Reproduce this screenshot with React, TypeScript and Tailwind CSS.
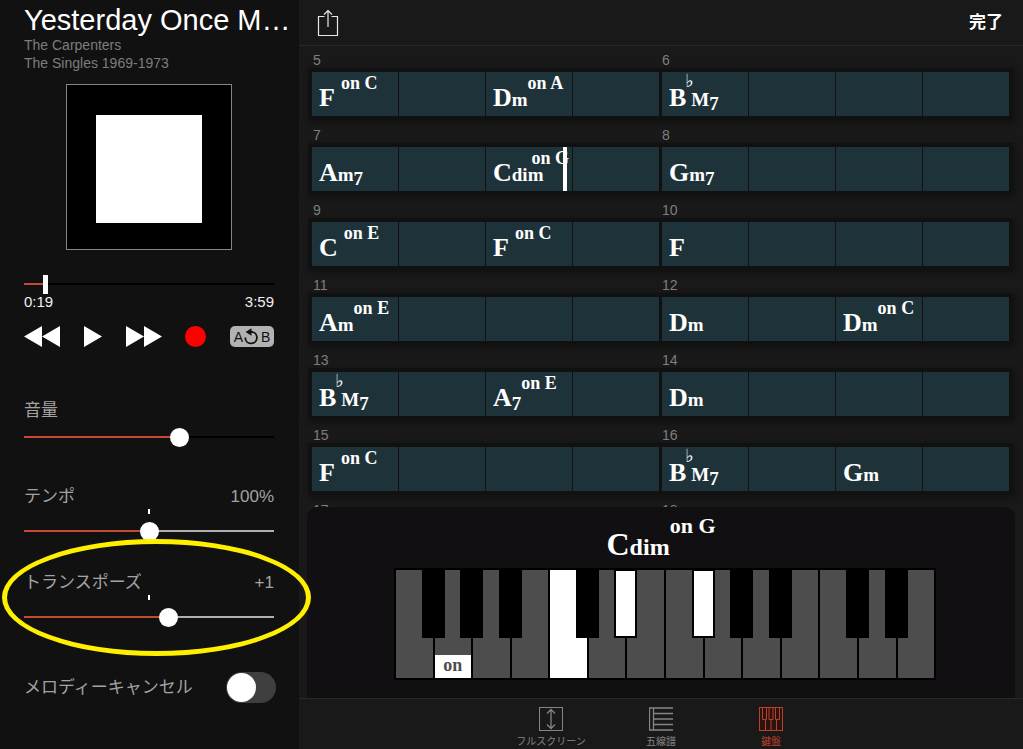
import { useState } from 'react';
import type { ReactNode } from 'react';
import clsx from 'clsx';

type ChordData = {
  root: string;
  flat?: boolean;
  quality?: string;
  seven?: boolean;
  bass?: string;
};

type Measure = {
  number: number;
  beats: (ChordData | null)[];
};

const MEASURES: Measure[] = [
  { number: 5, beats: [{ root: 'F', bass: 'C' }, null, { root: 'D', quality: 'm', bass: 'A' }, null] },
  { number: 6, beats: [{ root: 'B', flat: true, quality: 'M', seven: true }, null, null, null] },
  { number: 7, beats: [{ root: 'A', quality: 'm', seven: true }, null, { root: 'C', quality: 'dim', bass: 'G' }, null] },
  { number: 8, beats: [{ root: 'G', quality: 'm', seven: true }, null, null, null] },
  { number: 9, beats: [{ root: 'C', bass: 'E' }, null, { root: 'F', bass: 'C' }, null] },
  { number: 10, beats: [{ root: 'F' }, null, null, null] },
  { number: 11, beats: [{ root: 'A', quality: 'm', bass: 'E' }, null, null, null] },
  { number: 12, beats: [{ root: 'D', quality: 'm' }, null, { root: 'D', quality: 'm', bass: 'C' }, null] },
  { number: 13, beats: [{ root: 'B', flat: true, quality: 'M', seven: true }, null, { root: 'A', seven: true, bass: 'E' }, null] },
  { number: 14, beats: [{ root: 'D', quality: 'm' }, null, null, null] },
  { number: 15, beats: [{ root: 'F', bass: 'C' }, null, null, null] },
  { number: 16, beats: [{ root: 'B', flat: true, quality: 'M', seven: true }, null, { root: 'G', quality: 'm' }, null] },
  { number: 17, beats: [null, null, null, null] },
  { number: 18, beats: [null, null, null, null] },
];

const ROWS = Array.from({ length: MEASURES.length / 2 }, (_, i) => MEASURES.slice(i * 2, i * 2 + 2));

// White keys from left to right; `sharp` is the black key on the right edge
const KEYS: { lit?: boolean; bass?: boolean; sharp?: 'off' | 'lit' }[] = [
  { sharp: 'off' },
  { bass: true, sharp: 'off' },
  { sharp: 'off' },
  {},
  { lit: true, sharp: 'off' },
  { sharp: 'lit' },
  {},
  { sharp: 'lit' },
  { sharp: 'off' },
  { sharp: 'off' },
  {},
  { sharp: 'off' },
  { sharp: 'off' },
  {},
];

function Chord({ chord, large }: { chord: ChordData; large?: boolean }) {
  const small = large ? 'text-[24px] leading-[0px]' : 'text-[19px] leading-[0px]';
  return (
    <div className="flex items-start whitespace-nowrap font-['Liberation_Serif',serif] font-bold text-white">
      <div className={large ? 'mt-[21px] text-[32px] leading-8' : 'mt-[13px] text-[26px] leading-[26px]'}>
        {chord.root}
        {chord.flat && (
          <span className="relative inline-block h-0 w-[5px]">
            <span className="absolute -left-px bottom-4 font-['DejaVu_Sans',sans-serif] text-[18px] font-normal leading-none">
              ♭
            </span>
          </span>
        )}
        {chord.quality && <span className={small}>{chord.quality}</span>}
        {chord.seven && <span className={clsx(small, 'align-[-4px]')}>7</span>}
      </div>
      {chord.bass && (
        <div
          className={clsx(
            large ? 'mt-2 text-[22px] leading-[22px]' : 'mt-0.5 text-[18px] leading-[18px]',
            !chord.quality && !chord.seven && 'ml-1.5',
            // long names tuck the bass note above the quality to stay inside the beat
            !large && chord.quality === 'dim' && '-ml-3',
          )}
        >
          on {chord.bass}
        </div>
      )}
    </div>
  );
}

type SliderProps = {
  id: string;
  label: string;
  min: number;
  max: number;
  initial: number;
  rest: string;
  bar?: boolean;
};

function Slider({ id, label, min, max, initial, rest, bar }: SliderProps) {
  const [value, setValue] = useState(initial);
  const percent = ((value - min) / (max - min)) * 100;

  return (
    <input
      id={id}
      type="range"
      aria-label={label}
      min={min}
      max={max}
      value={value}
      onChange={(e) => setValue(Number(e.target.value))}
      className={clsx(
        'block h-5 w-full cursor-pointer appearance-none bg-[length:100%_2px] bg-center bg-no-repeat outline-none',
        '[&::-webkit-slider-thumb]:appearance-none [&::-webkit-slider-thumb]:bg-white',
        bar
          ? '[&::-webkit-slider-thumb]:h-[19px] [&::-webkit-slider-thumb]:w-[5px]'
          : '[&::-webkit-slider-thumb]:size-[19px] [&::-webkit-slider-thumb]:rounded-full',
      )}
      style={{ backgroundImage: `linear-gradient(to right, #c54a35 ${percent}%, ${rest} ${percent}%)` }}
    />
  );
}

function Tick() {
  return (
    <div className="flex h-3 justify-center">
      <div className="h-[5px] w-[2px] bg-white" />
    </div>
  );
}

function Transport() {
  return (
    <div className="mt-4 flex h-[21px] items-center justify-between">
      <button type="button" aria-label="Rewind">
        <svg width="36" height="21" viewBox="0 0 36 21" fill="#fff">
          <path d="M18 0v21L0 10.5zM36 0v21L18 10.5z" />
        </svg>
      </button>
      <button type="button" aria-label="Play">
        <svg width="18" height="21" viewBox="0 0 18 21" fill="#fff">
          <path d="M0 0l18 10.5L0 21z" />
        </svg>
      </button>
      <button type="button" aria-label="Fast forward">
        <svg width="36" height="21" viewBox="0 0 36 21" fill="#fff">
          <path d="M0 0l18 10.5L0 21zM18 0l18 10.5L18 21z" />
        </svg>
      </button>
      <button type="button" aria-label="Record" className="size-[21px] rounded-full bg-[#ff0000]" />
      <button
        type="button"
        aria-label="A-B repeat"
        className="flex h-[21px] w-11 items-center justify-center rounded-[5px] bg-[#b2b2b2] text-[14px] leading-4 text-[#111]"
      >
        A
        <svg className="shrink-0" width="18" height="17" viewBox="0 0 18 17" fill="none">
          <path d="M6 4h3.500a5.800 5.800 0 1 1-7.200 5.600" stroke="#111" strokeWidth="1.8" />
          <path d="M2.500 4L8.500 0.300v7.400z" fill="#111" />
        </svg>
        B
      </button>
    </div>
  );
}

function Sidebar() {
  return (
    <aside className="w-[299px] shrink-0 bg-[#111111] pl-6 pr-[25px] pt-1 text-[#a3a3a3]">
      <h1 className="-mr-6 whitespace-nowrap text-[29px] leading-8 text-white">Yesterday Once M…</h1>
      <p className="text-[14px] leading-[18px] text-[#7d7d7d]">The Carpenters</p>
      <p className="text-[14px] leading-[18px] text-[#7d7d7d]">The Singles 1969-1973</p>

      {/* Artwork */}
      <div className="mx-auto mt-3 flex size-[166px] items-center justify-center border border-[#858585] bg-black pt-1">
        <div className="h-[108px] w-[106px] bg-white" />
      </div>

      <div className="mt-6">
        <Slider id="position" label="Position" min={0} max={239} initial={19} rest="#000" bar />
        <div className="flex justify-between text-[15px] leading-4 text-[#f0f0f0]">
          <span>0:19</span>
          <span>3:59</span>
        </div>
      </div>

      <Transport />

      <div className="mt-[52px]">
        <label htmlFor="volume" className="block text-[17px] leading-6">音量</label>
        <div className="mt-1">
          <Slider id="volume" label="音量" min={0} max={100} initial={63} rest="#000" />
        </div>
      </div>

      <div className="mt-[38px]">
        <div className="flex justify-between text-[17px] leading-6">
          <label htmlFor="tempo">テンポ</label>
          <span>100%</span>
        </div>
        <Tick />
        <Slider id="tempo" label="テンポ" min={50} max={150} initial={100} rest="#b0b0b0" />
      </div>

      <div className="relative mt-[30px]">
        <div className="flex justify-between text-[17px] leading-6">
          <label htmlFor="transpose">トランスポーズ</label>
          <span>+1</span>
        </div>
        <Tick />
        <Slider id="transpose" label="トランスポーズ" min={-6} max={6} initial={1} rest="#b0b0b0" />
        {/* Highlight ring */}
        <div className="pointer-events-none absolute -bottom-[29px] -left-[22px] -right-[37px] -top-8 z-10 rounded-[50%] border-[5px] border-[#fff000]" />
      </div>

      <div className="-mr-0.5 mt-[45px] flex items-center justify-between">
        <label htmlFor="melody" className="text-[17px] leading-6">メロディーキャンセル</label>
        <input
          id="melody"
          type="checkbox"
          role="switch"
          className="h-[31px] w-[50px] cursor-pointer appearance-none rounded-full bg-[#3f3f3f] p-px before:block before:size-[29px] before:rounded-full before:bg-white checked:bg-[#c54a35] checked:before:ml-auto"
        />
      </div>
    </aside>
  );
}

function ChordSheet() {
  return (
    <div className="min-h-0 flex-1 overflow-hidden pl-[9px] pr-2.5 pt-1">
      {ROWS.map((row) => (
        <div key={row[0].number} className="mb-[5px]">
          <div className="grid h-[18px] grid-cols-2 gap-[3px] px-[5px] text-[14px] leading-5 text-[#7f7f7f]">
            {row.map((m) => (
              <span key={m.number}>{m.number}</span>
            ))}
          </div>
          <div className="grid grid-cols-2 gap-[3px] bg-[#111111] p-1 shadow-[2px_2px_5px_#111111]">
            {row.map((m) => (
              <div key={m.number} className="grid grid-cols-4 gap-px">
                {m.beats.map((chord, i) => (
                  <div key={i} className="relative h-11 min-w-0 bg-[#1e323a] pl-[7px]">
                    {chord && <Chord chord={chord} />}
                    {m.number === 7 && i === 2 && (
                      <div className="absolute inset-y-0 left-[89%] w-1 bg-white" />
                    )}
                  </div>
                ))}
              </div>
            ))}
          </div>
        </div>
      ))}
    </div>
  );
}

function Keyboard() {
  return (
    <div className="mx-auto mt-2 flex h-28 w-[542px] max-w-full gap-[2px] border-2 border-black bg-black">
      {KEYS.map((key, i) => (
        <div
          key={i}
          className={clsx('relative flex min-w-0 flex-1 flex-col justify-end', key.lit ? 'bg-white' : 'bg-[#4d4d4d]')}
        >
          {key.bass && (
            <div className="h-[23px] bg-white text-center font-['Liberation_Serif',serif] text-[18px] font-bold leading-[21px] text-[#4d4d4d]">
              on
            </div>
          )}
          {key.sharp && (
            <div
              className={clsx(
                'absolute -right-3 -top-px z-10 h-[69px] w-[23px] border-2 border-black',
                key.sharp === 'lit' ? 'bg-white' : 'bg-black',
              )}
            />
          )}
        </div>
      ))}
    </div>
  );
}

function Tab({ label, active, children }: { label: string; active?: boolean; children: ReactNode }) {
  return (
    <button
      type="button"
      className={clsx('flex w-[110px] flex-col items-center', active ? 'text-[#b8402c]' : 'text-[#858585]')}
    >
      <svg width="24" height="24" viewBox="0 0 24 24" fill="none" stroke="currentColor">
        {children}
      </svg>
      <span className="mt-[5px] text-[10px] leading-3">{label}</span>
    </button>
  );
}

export default function App() {
  return (
    <div className="flex h-screen overflow-hidden bg-[#191919] font-['Liberation_Sans','Noto_Sans_CJK_JP',sans-serif]">
      <Sidebar />

      <main className="flex min-w-0 flex-1 flex-col">
        <header className="flex h-[46px] shrink-0 items-center justify-between border-b border-[#292929] pl-[18px] pr-5">
          <button type="button" aria-label="Share">
            <svg width="22" height="28" viewBox="0 0 22 28" fill="none" stroke="#e8e8e8" strokeWidth="1.2">
              <path d="M7.500 7.500h-6v19h19v-19h-6" />
              <path d="M11 18V2M7 5.500L11 1.500l4 4" />
            </svg>
          </button>
          <button type="button" className="text-[17px] font-bold leading-6 text-white">完了</button>
        </header>

        <ChordSheet />

        {/* Current chord */}
        <section className="mx-2 shrink-0 rounded-t-[10px] bg-[#110f12] pb-[18px]">
          <div className="flex justify-center">
            <Chord chord={{ root: 'C', quality: 'dim', bass: 'G' }} large />
          </div>
          <div className="pl-2">
            <Keyboard />
          </div>
        </section>

        <nav className="flex shrink-0 justify-center border-t border-[#292929] pb-px pt-2">
          <Tab label="フルスクリーン">
            <rect x="0.500" y="0.500" width="23" height="23" />
            <path d="M12 3v18M8 6.500L12 2.500l4 4M8 17.500l4 4 4-4" strokeWidth="1.3" />
          </Tab>
          <Tab label="五線譜">
            <path d="M24 1H.5v22H24M4.500 1v22M4.500 6.500H24M4.500 12H24M4.500 17.500H24" strokeWidth="1.3" />
          </Tab>
          <Tab label="鍵盤" active>
            <rect x="0.500" y="0.500" width="23" height="23" fill="#2b1310" />
            <path d="M3.500 1v11.500h4V1M10 1v11.500h4V1M16.500 1v11.500h4V1M6.500 12.500V23M12 12.500V23M17.500 12.500V23" />
          </Tab>
        </nav>
      </main>
    </div>
  );
}
